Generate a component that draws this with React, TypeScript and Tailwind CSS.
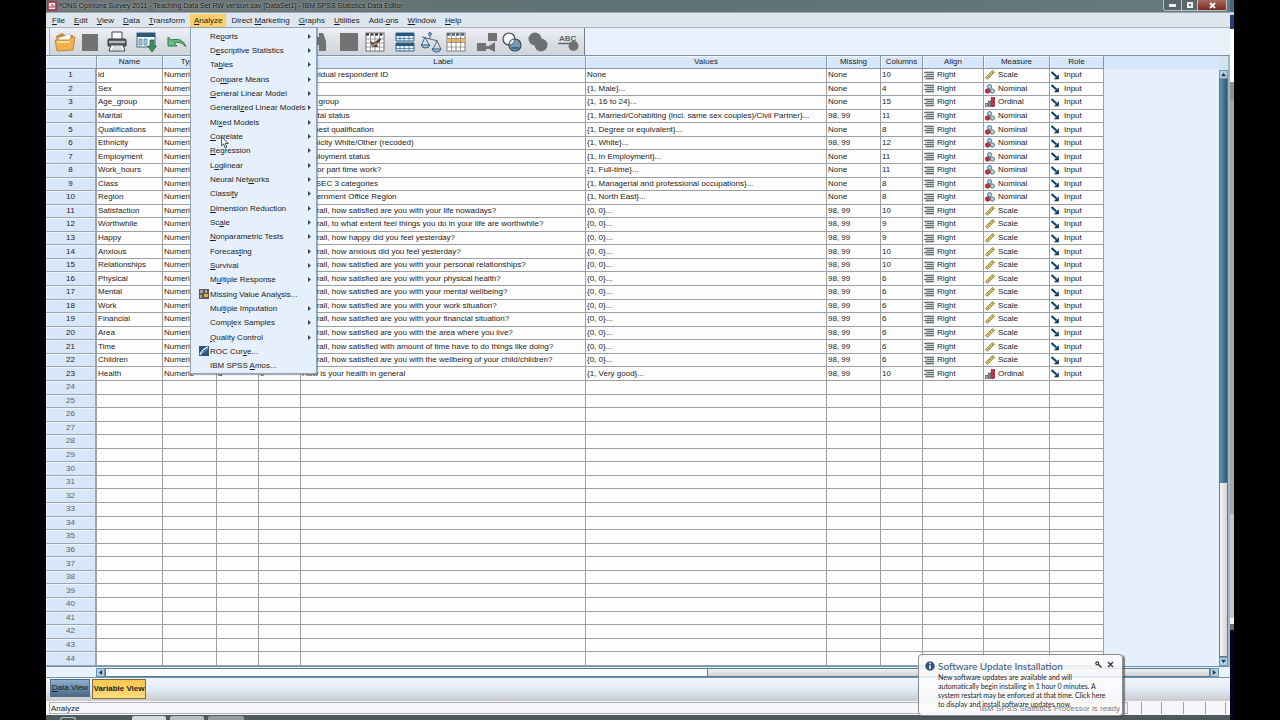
import { ReactNode } from 'react';

type Measure = 'Scale' | 'Nominal' | 'Ordinal';

type Variable = {
  name: string;
  width?: number;
  decimals?: number;
  label: string;
  values: string;
  missing: string;
  columns: number;
  measure: Measure;
};

const v = (
  name: string,
  label: string,
  values: string,
  missing: string,
  columns: number,
  measure: Measure,
): Variable => ({ name, label, values, missing, columns, measure });

const VARIABLES: Variable[] = [
  v('id', 'Individual respondent ID', 'None', 'None', 10, 'Scale'),
  v('Sex', '', '{1, Male}...', 'None', 4, 'Nominal'),
  v('Age_group', 'Age group', '{1, 16 to 24}...', 'None', 15, 'Ordinal'),
  v('Marital', 'Marital status', '{1, Married/Cohabiting (incl. same sex couples)/Civil Partner}...', '98, 99', 11, 'Nominal'),
  v('Qualifications', 'Highest qualification', '{1, Degree or equivalent}...', 'None', 8, 'Nominal'),
  v('Ethnicity', 'Ethnicity White/Other (recoded)', '{1, White}...', '98, 99', 12, 'Nominal'),
  v('Employment', 'Employment status', '{1, In Employment}...', 'None', 11, 'Nominal'),
  v('Work_hours', 'Full or part time work?', '{1, Full-time}...', 'None', 11, 'Nominal'),
  v('Class', 'NS-SEC 3 categories', '{1, Managerial and professional occupations}...', 'None', 8, 'Nominal'),
  v('Region', 'Government Office Region', '{1, North East}...', 'None', 8, 'Nominal'),
  v('Satisfaction', 'Overall, how satisfied are you with your life nowadays?', '{0, 0}...', '98, 99', 10, 'Scale'),
  v('Worthwhile', 'Overall, to what extent feel things you do in your life are worthwhile?', '{0, 0}...', '98, 99', 9, 'Scale'),
  v('Happy', 'Overall, how happy did you feel yesterday?', '{0, 0}...', '98, 99', 9, 'Scale'),
  v('Anxious', 'Overall, how anxious did you feel yesterday?', '{0, 0}...', '98, 99', 10, 'Scale'),
  v('Relationships', 'Overall, how satisfied are you with your personal relationships?', '{0, 0}...', '98, 99', 10, 'Scale'),
  v('Physical', 'Overall, how satisfied are you with your physical health?', '{0, 0}...', '98, 99', 6, 'Scale'),
  v('Mental', 'Overall, how satisfied are you with your mental wellbeing?', '{0, 0}...', '98, 99', 6, 'Scale'),
  v('Work', 'Overall, how satisfied are you with your work situation?', '{0, 0}...', '98, 99', 6, 'Scale'),
  v('Financial', 'Overall, how satisfied are you with your financial situation?', '{0, 0}...', '98, 99', 6, 'Scale'),
  v('Area', 'Overall, how satisfied are you with the area where you live?', '{0, 0}...', '98, 99', 6, 'Scale'),
  v('Time', 'Overall, how satisfied with amount of time have to do things like doing?', '{0, 0}...', '98, 99', 6, 'Scale'),
  v('Children', 'Overall, how satisfied are you with the wellbeing of your child/children?', '{0, 0}...', '98, 99', 6, 'Scale'),
  {
    ...v('Health', 'How is your health in general', '{1, Very good}...', '98, 99', 10, 'Ordinal'),
    width: 8,
    decimals: 0,
  },
];

const ROW_COUNT = 44;

// An underscore marks the mnemonic letter that follows it.
const MENU_BAR = [
  '_File',
  '_Edit',
  '_View',
  '_Data',
  '_Transform',
  '_Analyze',
  'Direct _Marketing',
  '_Graphs',
  '_Utilities',
  'Add-_ons',
  '_Window',
  '_Help',
];

type MenuEntry = { label: string; kind?: 'missing' | 'roc' | 'plain' };

const ANALYZE_MENU: MenuEntry[] = [
  { label: 'Re_ports' },
  { label: 'D_escriptive Statistics' },
  { label: 'Ta_bles' },
  { label: 'Co_mpare Means' },
  { label: '_General Linear Model' },
  { label: 'Generali_zed Linear Models' },
  { label: 'Mi_xed Models' },
  { label: '_Correlate' },
  { label: '_Regression' },
  { label: 'L_oglinear' },
  { label: 'Neural Net_works' },
  { label: 'Classi_fy' },
  { label: '_Dimension Reduction' },
  { label: 'Sc_ale' },
  { label: '_Nonparametric Tests' },
  { label: 'Forecas_ting' },
  { label: '_Survival' },
  { label: 'M_ultiple Response' },
  { label: 'Missing Value Anal_ysis...', kind: 'missing' },
  { label: 'Mul_tiple Imputation' },
  { label: 'Comp_lex Samples' },
  { label: '_Quality Control' },
  { label: 'ROC Cur_ve...', kind: 'roc' },
  { label: 'IBM SPSS _Amos...', kind: 'plain' },
];

function Mnemonic({ text }: { text: string }) {
  const at = text.indexOf('_');
  return (
    <span>
      {text.slice(0, at)}
      <span className="underline">{text[at + 1]}</span>
      {text.slice(at + 2)}
    </span>
  );
}

function AlignIcon() {
  return (
    <svg viewBox="0 0 10 9" className="h-[9px] w-[10px] shrink-0">
      <rect x="1" width="9" height="9" fill="#c9ccd0" />
      <path d="M0 1.5h10M3 3.5h7M0 5.5h10M2 7.5h8" stroke="#6d7074" strokeWidth="1" />
    </svg>
  );
}

function RoleIcon() {
  return (
    <svg viewBox="0 0 9 9" className="h-[9px] w-[9px] shrink-0">
      <path d="M.5 1L5.5 5.5" stroke="#12406f" strokeWidth="2" />
      <path d="M7.8 3.2V8.2H2.8z" fill="#0f3561" />
    </svg>
  );
}

function MeasureIcon({ measure }: { measure: Measure }) {
  if (measure === 'Scale') {
    return (
      <svg viewBox="0 0 10 10" className="h-[10px] w-[10px] shrink-0">
        <path d="M.5 7.6L7.5.6l2 1.6-7 7z" fill="#e3cd6d" stroke="#7b6a22" strokeWidth=".8" />
        <path d="M3 6l1 1M5 4l1 1M7 2l1 1" stroke="#5f5015" strokeWidth=".6" />
      </svg>
    );
  }
  if (measure === 'Ordinal') {
    return (
      <svg viewBox="0 0 10 10" className="h-[10px] w-[10px] shrink-0">
        <rect x=".4" y="6.4" width="2.4" height="3" fill="#8cc0d8" stroke="#456" strokeWidth=".6" />
        <rect x="3.2" y="4" width="2.6" height="5.4" fill="#8d8f96" stroke="#444" strokeWidth=".6" />
        <rect x="6.2" y=".5" width="3.4" height="9" fill="#d02a3c" stroke="#7c1422" strokeWidth=".6" />
      </svg>
    );
  }
  return (
    <svg viewBox="0 0 10 10" className="h-[10px] w-[10px] shrink-0">
      <circle cx="4.6" cy="2.6" r="2.1" fill="#a9cfe3" stroke="#3c5f78" strokeWidth=".8" />
      <circle cx="7.4" cy="7" r="2.1" fill="#b5d2d8" stroke="#3c5360" strokeWidth=".8" />
      <circle cx="2.6" cy="7" r="2.3" fill="#c22f3e" stroke="#6e1721" strokeWidth=".6" />
    </svg>
  );
}

function ToolButton({ label, children }: { label: string; children?: ReactNode }) {
  return (
    <button type="button" aria-label={label} className="flex w-[26px] items-center justify-center">
      <svg viewBox="0 0 22 22" className="h-[22px] w-[22px]">
        {children}
      </svg>
    </button>
  );
}

function ToolGroup({ children }: { children: ReactNode }) {
  return <div className="flex">{children}</div>;
}

function Toolbar() {
  return (
    <div className="flex h-[28px] shrink-0 border-b border-[#7d93a3] bg-[#e8f0fb] pl-[3px]">
      <div className="flex gap-1 border-r border-l border-l-[#a8b0b8] border-r-[#6f7f8c] bg-linear-to-b from-[#eef2f8] via-[#dcdfe4] to-[#cfd5dc] px-[2px]">
        <ToolGroup>
          <ToolButton label="Open data document">
            <path d="M2 5l6-3 3 2 8 0v6H3z" fill="#c98a34" />
            <path d="M4 7L16 3l2 9H5z" fill="#fff" stroke="#b9a27c" strokeWidth=".5" />
            <path d="M1 9h14l3-3h3l-2 13-16 1z" fill="#f2b04c" stroke="#b97420" strokeWidth=".8" />
            <path d="M3 11h13" stroke="#ffe0a0" strokeWidth="2" />
          </ToolButton>
          <ToolButton label="Save this document">
            <rect x="2" y="3" width="16" height="17" fill="#727272" />
          </ToolButton>
          <ToolButton label="Print">
            <path d="M6 1h10v8H6z" fill="#f6f8fa" stroke="#444" strokeWidth="1" />
            <path d="M2 9q0-1 1-1h16q1 0 1 1v6H2z" fill="#5e6166" stroke="#333" strokeWidth="1" />
            <path d="M3 11h16" stroke="#d5d8dc" strokeWidth="1.5" />
            <path d="M5 14h12l2 6H3z" fill="#fff" stroke="#444" strokeWidth="1" />
            <path d="M7 16h8M6 18h10" stroke="#9fb8cc" strokeWidth="1" />
          </ToolButton>
        </ToolGroup>
        <ToolGroup>
          <ToolButton label="Recall recently used dialogs">
            <rect x="1" y="2" width="18" height="14" fill="#f4fafd" stroke="#3f6480" strokeWidth="1" />
            <rect x="1" y="2" width="18" height="4" fill="#2d5877" />
            <path d="M3 8h3v6H3zM8 8h3v6H8z" fill="#a3cce2" stroke="#4a7c9c" strokeWidth=".7" />
            <path d="M14 9h4v6h2.500L16 21l-4.500-6H14z" fill="#3e8b57" stroke="#1f5c35" strokeWidth=".7" />
          </ToolButton>
        </ToolGroup>
        <ToolGroup>
          <ToolButton label="Undo">
            <path d="M2 6v9h9l-3-3q6-3 12 4-3-10-15-7z" fill="#6fbd84" stroke="#2f7a48" strokeWidth="1" />
          </ToolButton>
          <ToolButton label="Redo">
            <path d="M20 6v9h-9l3-3q-6-3-12 4 3-10 15-7z" fill="#777" />
          </ToolButton>
        </ToolGroup>
        <ToolGroup>
          <ToolButton label="Go to case">
            <rect x="3" y="3" width="16" height="16" fill="#777" />
          </ToolButton>
          <ToolButton label="Go to variable">
            <rect x="3" y="3" width="16" height="16" fill="#777" />
          </ToolButton>
        </ToolGroup>
        <ToolGroup>
          <ToolButton label="Variables">
            <rect x="3" y="3" width="16" height="16" fill="#777" />
          </ToolButton>
        </ToolGroup>
        <ToolGroup>
          <ToolButton label="Find">
            <path d="M1 20V10l3-8h4v4h3V2h4l3 8v10h-7v-6H8v6z" fill="#727272" />
          </ToolButton>
        </ToolGroup>
        <ToolGroup>
          <ToolButton label="Insert cases">
            <rect x="2" y="2" width="18" height="18" fill="#727272" />
          </ToolButton>
          <ToolButton label="Insert variable">
            <rect x="2" y="2" width="18" height="18" fill="#fff" stroke="#555" strokeWidth=".8" />
            <path d="M2 3.500h18" stroke="#222" strokeWidth="2" strokeDasharray="3 1.500" />
            <path d="M2 8h18M2 12h18M2 16h18M6.500 4v16M11 4v16M15.500 4v16" stroke="#777" strokeWidth=".7" />
            <path d="M6 9l3 3 2-1 5-4 1 2-4 4 1 3H8z" fill="#444" />
            <path d="M8 15l5-3" stroke="#c8965a" strokeWidth="1.500" />
          </ToolButton>
        </ToolGroup>
        <ToolGroup>
          <ToolButton label="Split file">
            <path d="M2 2h18v8H2zM2 12h18v8H2z" fill="#e4f2fa" stroke="#35617f" strokeWidth="1" />
            <path d="M2 3.500h18M2 13.500h18" stroke="#255b7e" strokeWidth="3" />
            <path d="M2 7.500h18M2 17.500h18M6 5v5M10 5v5M15 5v5M6 15v5M10 15v5M15 15v5" stroke="#4a7c9c" strokeWidth=".8" />
          </ToolButton>
          <ToolButton label="Weight cases">
            <path d="M2 6l16 4M10 2v6M5 6L1.500 14M5 6l4 8M17 10l-4 8M17 10l4 8" stroke="#46698a" strokeWidth="1" fill="none" />
            <path d="M1 14h9q-1 3-4.500 3T1 14zM12 18h9q-1 3-4.500 3T12 18z" fill="#a8cbe2" stroke="#2f5678" strokeWidth="1" />
            <circle cx="10" cy="3" r="1.500" fill="#8db5d1" stroke="#2f5678" strokeWidth=".8" />
          </ToolButton>
          <ToolButton label="Select cases">
            <rect x="1" y="2" width="18" height="18" fill="#fff" stroke="#666" strokeWidth=".8" />
            <path d="M1 3.500h18" stroke="#4b6276" strokeWidth="2.500" strokeDasharray="3.500 1" />
            <path d="M1 9.500h18" stroke="#f0b765" strokeWidth="4" />
            <path d="M1 7.500h18M1 11.500h18M1 16h18M5.500 5v15M10 5v15M14.500 5v15" stroke="#777" strokeWidth=".7" />
          </ToolButton>
        </ToolGroup>
        <ToolGroup>
          <ToolButton label="Value labels">
            <path d="M12 2h9v8h-9zM1 12h9v3h3l6-4v10l-6-3h-3v2H1z" fill="#727272" />
          </ToolButton>
          <ToolButton label="Use variable sets">
            <circle cx="7" cy="8" r="6" fill="#f6f8fa" stroke="#444" strokeWidth="1.200" />
            <circle cx="13" cy="14" r="6" fill="#7d97ad" stroke="#3b4c5b" strokeWidth="1.200" />
            <path d="M7 14q0-6 6-6-1 6-6 6z" fill="#dfe8ef" stroke="#3b4c5b" strokeWidth=".8" />
            <path d="M9 16h8l-1 2h-5z" fill="#2a6b9c" />
          </ToolButton>
          <ToolButton label="Show all variables">
            <circle cx="7" cy="8" r="6.500" fill="#6f7072" />
            <circle cx="13" cy="14" r="6.500" fill="#6f7072" />
          </ToolButton>
        </ToolGroup>
        <ToolGroup>
          <ToolButton label="Spell check">
            <path d="M0 12.500h14" stroke="#666" strokeWidth="1.500" />
            <circle cx="15.500" cy="15" r="5" fill="#707070" />
            <text x="1" y="10" fontSize="8" fontWeight="700" fill="#666">
              ABC
            </text>
          </ToolButton>
        </ToolGroup>
      </div>
    </div>
  );
}

function EntryIcon({ kind }: { kind?: MenuEntry['kind'] }) {
  if (kind === 'missing') {
    return (
      <svg viewBox="0 0 10 10" className="h-[10px] w-[10px]">
        <rect width="10" height="10" fill="#5c5a58" />
        <path d="M1 1h3v3H1zM6 1h2v3H6zM1 6h2v3H1z" fill="#a9a59c" />
        <path d="M5 5h4v3H5z" fill="#d8b24e" />
      </svg>
    );
  }
  if (kind === 'roc') {
    return (
      <svg viewBox="0 0 10 10" className="h-[10px] w-[10px]">
        <rect width="10" height="10" fill="#2e567e" />
        <path d="M1 9Q3 3 9 1" stroke="#fff" strokeWidth="1.300" fill="none" />
        <path d="M1 9L9 2.500" stroke="#9cc3e2" strokeWidth=".8" />
      </svg>
    );
  }
  return null;
}

function AnalyzeMenu() {
  return (
    <ul
      role="menu"
      className="absolute top-full left-0 z-10 flex h-[347px] w-[127px] flex-col border border-[#8ea3b8] bg-[#e6f0fc] pt-px shadow-[1px_1px_1px_rgba(90,100,110,0.5)]"
    >
      {ANALYZE_MENU.map(({ label, kind }) => (
        <li key={label} role="none" className="flex min-h-[14px] grow">
          <button type="button" role="menuitem" className="flex w-full items-center text-left leading-[13px]">
            <span className="flex w-[19px] shrink-0 justify-end pr-px">
              <EntryIcon kind={kind} />
            </span>
            <span className="grow whitespace-nowrap">
              <Mnemonic text={label} />
            </span>
            {kind ? null : (
              <svg viewBox="0 0 3 5" className="mr-[5px] h-[5px] w-[3px] shrink-0">
                <path d="M0 0l3 2.500L0 5z" fill="#3c4650" />
              </svg>
            )}
          </button>
        </li>
      ))}
      <svg viewBox="0 0 8 13" className="pointer-events-none absolute top-[108px] left-[30px] h-[13px] w-[8px]">
        <path d="M.6.8v9l2-1.800 1.600 4 1.600-.8L4.300 7.500H7.200z" fill="#fff" stroke="#222" strokeWidth=".8" />
      </svg>
    </ul>
  );
}

const th = 'border-r border-b border-[#8798a8] p-0 text-center font-normal shadow-[inset_1px_1px_0_#f4f9ff]';
const td = 'overflow-hidden border-r border-b border-[#9da0a3] bg-[#fdfdfe] py-0 pr-0 pl-px whitespace-nowrap';

function VariableTable() {
  return (
    <table className="h-full w-[1058px] shrink-0 table-fixed border-separate border-spacing-0 leading-[12px]">
      <colgroup>
        <col className="w-[51px]" />
        <col className="w-[66px]" />
        <col className="w-[54px]" />
        <col className="w-[42px]" />
        <col className="w-[42px]" />
        <col className="w-[285px]" />
        <col className="w-[241px]" />
        <col className="w-[54px]" />
        <col className="w-[42px]" />
        <col className="w-[61px]" />
        <col className="w-[66px]" />
        <col className="w-[54px]" />
      </colgroup>
      <thead>
        <tr className="bg-[#d6e6fb]">
          <th className={th} />
          {['Name', 'Type', 'Width', 'Decimals', 'Label', 'Values', 'Missing', 'Columns', 'Align', 'Measure', 'Role'].map(
            title => (
              <th key={title} scope="col" className={th}>
                {title}
              </th>
            ),
          )}
        </tr>
      </thead>
      <tbody>
        {Array.from({ length: ROW_COUNT }, (_, i) => {
          const row = VARIABLES[i];
          return (
            <tr key={i}>
              <th
                scope="row"
                className={`border-r-2 border-b border-[#9aa5b0] bg-[#d8e6fa] p-0 text-center font-normal shadow-[inset_1px_1px_0_#eef5ff] ${row ? 'text-[#1c1c1c]' : 'text-[#5a5f66]'}`}
              >
                {i + 1}
              </th>
              <td className={td}>{row?.name}</td>
              <td className={td}>{row && 'Numeric'}</td>
              <td className={td}>{row?.width}</td>
              <td className={td}>{row?.decimals}</td>
              <td className={td}>{row?.label}</td>
              <td className={td}>{row?.values}</td>
              <td className={td}>{row?.missing}</td>
              <td className={td}>{row?.columns}</td>
              <td className={td}>
                {row && (
                  <span className="flex items-center gap-[3px]">
                    <AlignIcon />
                    Right
                  </span>
                )}
              </td>
              <td className={td}>
                {row && (
                  <span className="flex items-center gap-[3px]">
                    <MeasureIcon measure={row.measure} />
                    {row.measure}
                  </span>
                )}
              </td>
              <td className={td}>
                {row && (
                  <span className="flex items-center gap-1">
                    <RoleIcon />
                    Input
                  </span>
                )}
              </td>
            </tr>
          );
        })}
      </tbody>
    </table>
  );
}

function ScrollArrow({ label, d }: { label: string; d: string }) {
  return (
    <button
      type="button"
      aria-label={label}
      className="flex h-[9px] w-[9px] shrink-0 items-center justify-center border border-[#6f93ac] bg-[#b4cfe3]"
    >
      <svg viewBox="0 0 6 6" className="h-[5px] w-[5px]">
        <path d={d} fill="#223c52" />
      </svg>
    </button>
  );
}

function UpdateNotice() {
  return (
    <aside className="absolute right-[107px] bottom-[4px] z-20 flex h-[62px] w-[205px] gap-[3px] rounded-[4px] border border-[#8a8d90] bg-[#fbfcfd]/85 py-[4px] pr-[8px] pl-[6px] font-['Lato',sans-serif] shadow-[2px_1px_1px_rgba(60,60,60,0.6)]">
      <svg viewBox="0 0 10 10" className="mt-[2px] h-[10px] w-[10px] shrink-0">
        <circle cx="5" cy="5" r="4.600" fill="#2f4e78" stroke="#8593a5" strokeWidth=".7" />
        <path d="M5 1.800v1.400M5 4.200V8" stroke="#fff" strokeWidth="1.600" />
      </svg>
      <div className="min-w-0 grow whitespace-nowrap">
        <div className="flex justify-between">
          <h2 className="text-[10px] leading-[14px] text-[#3d5a80]">Software Update Installation</h2>
          <div className="flex h-[10px] items-center gap-[5px]">
            <button type="button" aria-label="Options">
              <svg viewBox="0 0 7 7" className="h-[7px] w-[7px]">
                <circle cx="2.300" cy="2.300" r="1.500" fill="none" stroke="#333" strokeWidth="1.200" />
                <path d="M3.300 3.300L6.500 6.500" stroke="#333" strokeWidth="1.400" />
              </svg>
            </button>
            <button type="button" aria-label="Close">
              <svg viewBox="0 0 7 7" className="h-[7px] w-[7px]">
                <path d="M1 1l5 5M6 1L1 6" stroke="#333" strokeWidth="1.300" />
              </svg>
            </button>
          </div>
        </div>
        <p className="text-[7px] leading-[9px] text-[#1e1e1e]">
          New software updates are available and will
          <br />
          automatically begin installing in 1 hour 0 minutes. A
          <br />
          system restart may be enforced at that time. Click here
          <br />
          to display and install software updates now.
        </p>
      </div>
    </aside>
  );
}

export default function App() {
  return (
    <div className="flex h-screen bg-black pr-[46px] pl-[46px] font-['Liberation_Sans',Arial,sans-serif] text-[8px] text-[#1c1c1c]">
      <main className="relative flex min-w-0 grow flex-col overflow-hidden bg-[#e8f0fb]">
        <header className="flex h-[13px] shrink-0 items-center border-b border-[#9aa8ad] bg-linear-to-r from-[#6f7577] via-[#5d7272] to-[#657a79]">
          <svg viewBox="0 0 10 10" className="mr-[2px] ml-px h-[10px] w-[10px] shrink-0">
            <rect x="1" y="1" width="8" height="8" fill="#eee" stroke="#a32a3c" strokeWidth="1.500" />
            <path d="M3 7V5M5 7V3M7 7V4" stroke="#a32a3c" strokeWidth="1" />
          </svg>
          <h1 className="grow truncate text-[7px] leading-[12px] text-[#141414] [text-shadow:0_0_3px_#d5d9da]">
            *ONS Opinions Survey 2011 - Teaching Data Set RW version.sav [DataSet1] - IBM SPSS Statistics Data Editor
          </h1>
          <div className="mr-[3px] flex h-[11px] self-start overflow-hidden rounded-b-[3px] border border-t-0 border-[#b9c2c4]">
            <button type="button" aria-label="Minimize" className="flex w-[18px] items-center justify-center border-r border-[#b9c2c4] bg-[#59666a]">
              <span className="h-[3px] w-[7px] bg-[#f0f0f0]" />
            </button>
            <button type="button" aria-label="Restore" className="flex w-[16px] items-center justify-center border-r border-[#b9c2c4] bg-[#59666a]">
              <span className="h-[6px] w-[6px] border-2 border-[#f0f0f0]" />
            </button>
            <button type="button" aria-label="Close window" className="flex w-[28px] items-center justify-center bg-linear-to-b from-[#a66a62] to-[#7d231c]">
              <svg viewBox="0 0 7 7" className="h-[7px] w-[7px]">
                <path d="M1 1l5 5M6 1L1 6" stroke="#fff" strokeWidth="1.800" />
              </svg>
            </button>
          </div>
        </header>

        <nav className="flex h-[15px] shrink-0 gap-px border-b border-[#a5b1bc] bg-[#dde6ef] pt-px pl-[2px]">
          {MENU_BAR.map(item => (
            <div key={item} className="relative">
              <button
                type="button"
                className={`h-full px-[4px] leading-[13px] whitespace-nowrap ${item === '_Analyze' ? 'bg-[#fbd068]' : ''}`}
              >
                <Mnemonic text={item} />
              </button>
              {item === '_Analyze' ? <AnalyzeMenu /> : null}
            </div>
          ))}
        </nav>

        <Toolbar />

        <div className="flex min-h-0 grow">
          <VariableTable />
          <div className="flex grow flex-col bg-[#e6effc]">
            <div className="h-[13px] bg-[#d6e6fb]" />
          </div>
          <div className="flex flex-col border-r-2 border-[#9db8cb] bg-[#d5e5f0] pt-[14px]">
            <ScrollArrow label="Scroll up" d="M0 5L3 1l3 4z" />
            <div className="min-h-0 w-[9px] grow-[7] border-x border-[#4f7892] bg-linear-to-r from-[#6a90a8] to-[#2c5873]" />
            <div className="min-h-0 w-[9px] grow-[3] border border-[#587d96] bg-linear-to-r from-[#f7f7f7] to-[#d4d4d4]" />
            <ScrollArrow label="Scroll down" d="M0 1l3 4 3-4z" />
          </div>
        </div>

        <div className="flex h-[12px] shrink-0 items-center border-y border-[#6d94ad] bg-[#e6f3fc] pr-[11px] pl-[50px]">
          <ScrollArrow label="Scroll left" d="M5 0L1 3l4 3z" />
          <div className="h-[9px] grow-[6] border border-[#587d96] bg-[#fdfdfe]" />
          <div className="h-[9px] grow-[5] border border-l-0 border-[#587d96] bg-linear-to-b from-[#f1f1f1] to-[#cfd1d3]" />
          <ScrollArrow label="Scroll right" d="M1 0l4 3-4 3z" />
        </div>

        <div className="flex h-[24px] shrink-0 items-start gap-[2px] border-b border-[#f8f8f8] bg-linear-to-b from-[#f3f5f8] via-[#e2eaf5] to-[#c9cacc] pt-px pl-1">
          <button
            type="button"
            className="h-[18px] w-[40px] border border-[#526d84] bg-linear-to-b from-[#8eb0d0] to-[#4d6a83] whitespace-nowrap text-[#0e1c2c]"
          >
            <span className="underline">D</span>ata View
          </button>
          <button
            type="button"
            className="h-[20px] w-[54px] border border-[#7b6a3c] bg-linear-to-b from-[#fbc74e] to-[#ffdc7d] font-bold whitespace-nowrap"
          >
            Variable View
          </button>
        </div>

        <footer className="flex h-[13px] shrink-0 bg-[#f4f6f9] pl-[3px] leading-[11px]">
          <div className="flex h-[12px] grow justify-between border border-[#b0b4b8] px-px">
            <span>Analyze</span>
            {/* the processor state stays readable through the notice */}
            <span className="relative z-30 pr-[6px] text-[#77797c]">IBM SPSS Statistics Processor is ready</span>
          </div>
          <div className="h-[12px] w-[14px] border-r border-[#9da1a5]" />
          <div className="h-[12px] w-[20px] border-r border-[#9da1a5]" />
          <div className="h-[12px] w-[22px] border-r border-[#9da1a5]" />
          <div className="h-[12px] w-[22px] border-r border-[#9da1a5]" />
          <div className="h-[12px] w-[20px] border-r border-[#9da1a5]" />
          <div className="w-[4px]" />
        </footer>

        <div className="flex h-[5px] shrink-0 items-end bg-[#4e595b] pl-[14px]">
          <div className="h-[3px] w-[16px] rounded-t-full border border-b-0 border-[#b8c2c4]" />
          <div className="ml-[56px] flex gap-[4px]">
            <div className="h-[4px] w-[34px] rounded-t-[2px] bg-[#d3d9dc]" />
            <div className="h-[4px] w-[34px] rounded-t-[2px] bg-[#b9bfc2]" />
            <div className="h-[4px] w-[36px] rounded-t-[2px] bg-[#979c9e]" />
          </div>
        </div>

        <UpdateNotice />
      </main>

      <div className="flex w-[4px] shrink-0 flex-col">
        <div className="h-[12px] bg-[#3d6a80]" />
        <div className="h-[3px] bg-[#c8d4dc]" />
        <div className="h-[14px] bg-[#25406f]" />
        <div className="h-[53px] bg-white" />
        <div className="h-[18px] bg-[#8d9092]" />
        <div className="grow-[4] bg-[#a3a7aa]" />
        <div className="grow bg-[#c3c6c9]" />
        <div className="h-[6px] bg-[#f2f2f2]" />
        <div className="h-[6px] bg-[#6c6f72]" />
        <div className="h-[90px] bg-[#030320]" />
      </div>
    </div>
  );
}
